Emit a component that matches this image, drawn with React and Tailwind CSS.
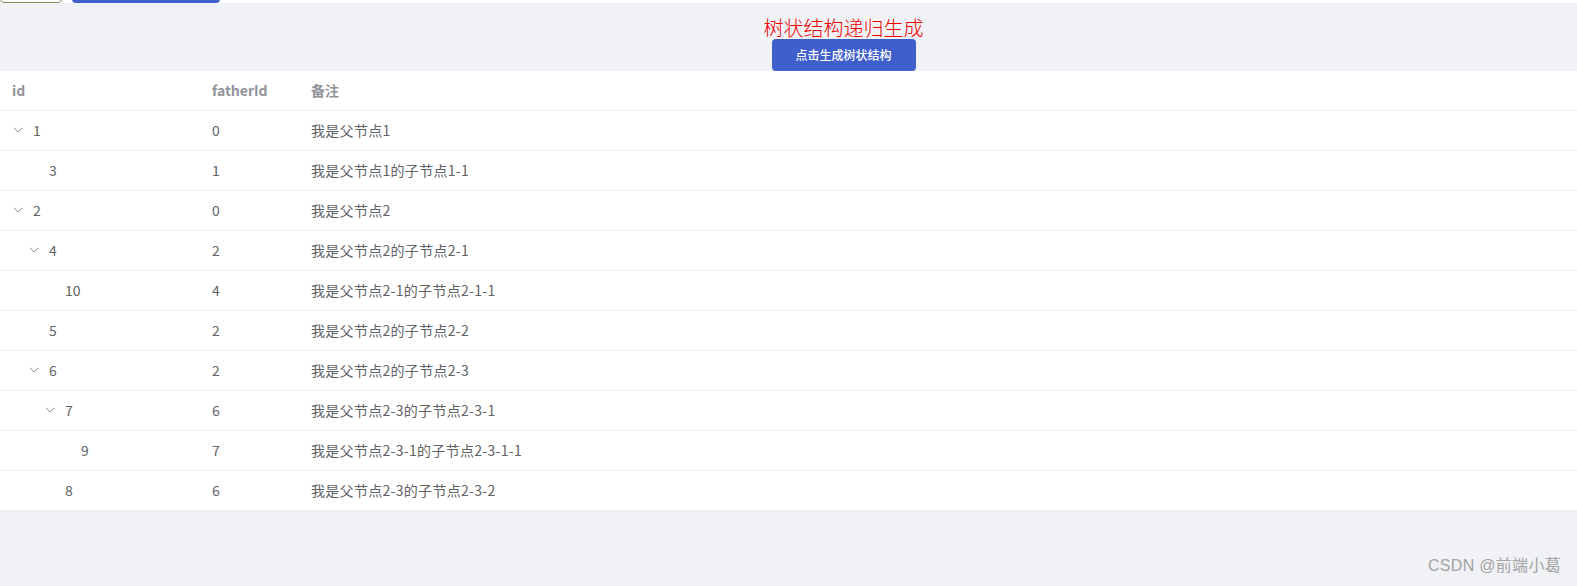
import React from "react";

const rows = [
  { id: 1, fatherId: 0, remark: "我是父节点1", level: 0, hasChildren: true },
  { id: 3, fatherId: 1, remark: "我是父节点1的子节点1-1", level: 1 },
  { id: 2, fatherId: 0, remark: "我是父节点2", level: 0, hasChildren: true },
  { id: 4, fatherId: 2, remark: "我是父节点2的子节点2-1", level: 1, hasChildren: true },
  { id: 10, fatherId: 4, remark: "我是父节点2-1的子节点2-1-1", level: 2 },
  { id: 5, fatherId: 2, remark: "我是父节点2的子节点2-2", level: 1 },
  { id: 6, fatherId: 2, remark: "我是父节点2的子节点2-3", level: 1, hasChildren: true },
  { id: 7, fatherId: 6, remark: "我是父节点2-3的子节点2-3-1", level: 2, hasChildren: true },
  { id: 9, fatherId: 7, remark: "我是父节点2-3-1的子节点2-3-1-1", level: 3 },
  { id: 8, fatherId: 6, remark: "我是父节点2-3的子节点2-3-2", level: 2 },
];

// small chevron used by the tree toggle
const Arrow = () => (
  <svg width="10" height="6" viewBox="0 0 10 6" className="block">
    <path d="M0.8 0.8 L5 5 L9.2 0.8" fill="none" stroke="#909399" strokeWidth="1" />
  </svg>
);

const App = () => {
  return (
    <div
      className="min-h-screen bg-[#f0f2f5] flex flex-col"
      style={{ fontFamily: '"Noto Sans CJK SC", "Open Sans", sans-serif' }}
    >
      {/* cropped toolbar at the very top */}
      <div className="h-[3px] bg-white overflow-hidden flex items-end gap-[10px] shrink-0">
        <button className="w-[62px] h-[30px] border border-[#8c8c63] rounded-[4px] bg-white shrink-0" />
        <button className="w-[148px] h-[30px] rounded-[4px] bg-[#3f5fcc] shrink-0" />
      </div>

      <div className="flex flex-col items-center pt-[13px] pl-[110px] shrink-0">
        <h2 className="text-[20px] leading-[23px] text-[#ee0000] font-light">树状结构递归生成</h2>
        <button className="h-[32px] w-[144px] rounded-[4px] bg-[#3f5fcc] text-white text-[12px] font-medium">
          点击生成树状结构
        </button>
      </div>

      <table className="w-full bg-white border-collapse text-[14px] shrink-0">
        <thead>
          <tr className="h-[39px] border-b border-[#ebeef5] text-[#909399] font-bold text-left">
            <th className="w-[200px] pl-[12px] font-bold">id</th>
            <th className="w-[100px] pl-[12px] font-bold">fatherId</th>
            <th className="pl-[11px] font-bold">备注</th>
          </tr>
        </thead>
        <tbody>
          {rows.map((row) => (
            <tr key={row.id} className="h-[40px] border-b border-[#ebeef5] text-[#606266]">
              <td className="pl-[12px]">
                <div className="flex items-center" style={{ paddingLeft: row.level * 16 }}>
                  <span className="w-[21px] flex items-center pl-[1px]">
                    {row.hasChildren && <Arrow />}
                  </span>
                  <span>{row.id}</span>
                </div>
              </td>
              <td className="pl-[12px]">{row.fatherId}</td>
              <td className="pl-[11px] tracking-[0.3px]">{row.remark}</td>
            </tr>
          ))}
        </tbody>
      </table>

      <div className="flex-1 flex justify-end items-end pr-[16px] pb-[8px]">
        <span
          className="text-[16px] tracking-[0.3px] text-[#a3a3a3]"
          style={{ fontFamily: '"Liberation Sans", "Noto Sans CJK SC", sans-serif' }}
        >
          CSDN @前端小葛
        </span>
      </div>
    </div>
  );
};

export default App;
